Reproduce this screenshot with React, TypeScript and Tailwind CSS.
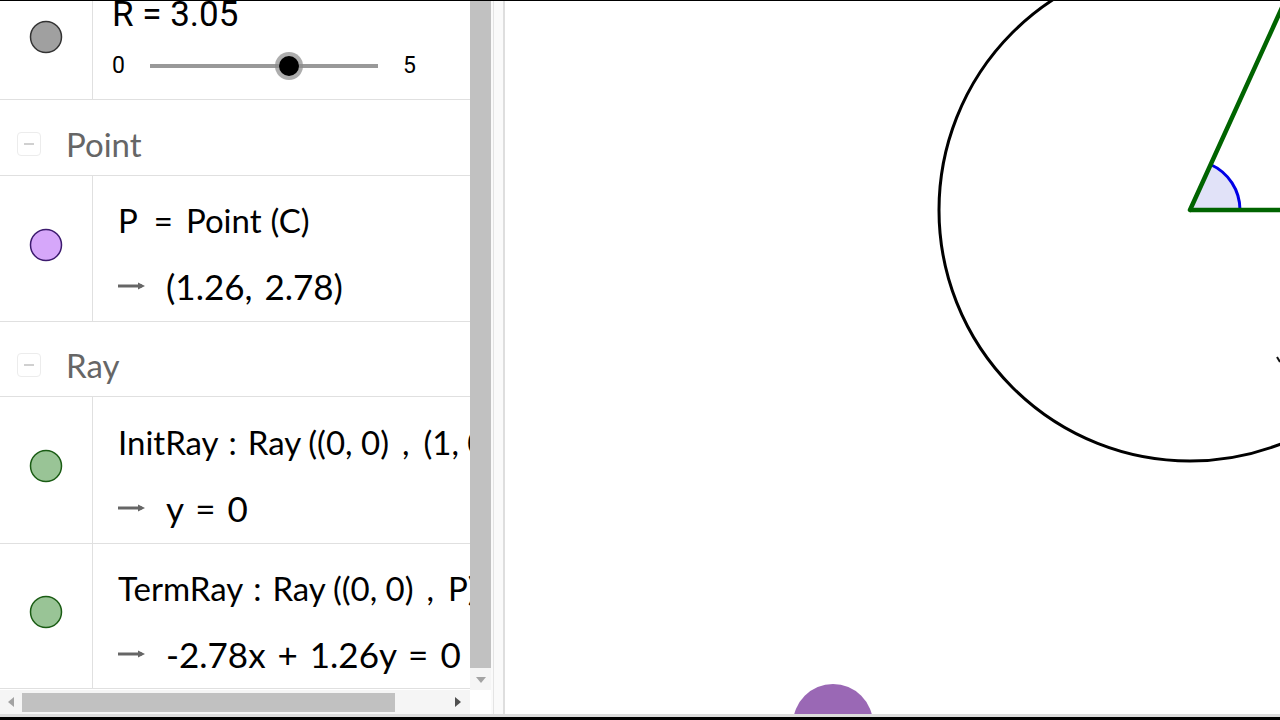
import React from "react";

const math = { fontFamily: "Lato, 'Open Sans', sans-serif" };
const ui = { fontFamily: "Roboto, 'Liberation Sans', sans-serif" };

function Dot({ fill, stroke }: { fill: string; stroke: string }) {
  return (
    <svg width="34" height="34" viewBox="0 0 34 34">
      <circle cx="17" cy="17" r="15.5" fill={fill} stroke={stroke} strokeWidth="1.5" />
    </svg>
  );
}

function Arrow() {
  return (
    <svg width="28" height="12" viewBox="0 0 28 12" className="shrink-0">
      <line x1="0" y1="6" x2="24" y2="6" stroke="#666" strokeWidth="3" />
      <path d="M20 2.5 L27 6 L20 9.5 Z" fill="#666" />
    </svg>
  );
}

// fixed-width gap between math tokens
function Sp({ w }: { w: string }) {
  return <span className={`inline-block ${w}`} />;
}

function GroupHeader({ title, h }: { title: string; h: string }) {
  return (
    <div className={`flex items-center border-b border-[#e0e0e0] pl-[17px] pt-[12px] ${h}`}>
      <div className="flex h-[24px] w-[24px] items-center justify-center rounded-[4px] border border-[#ececec]">
        <div className="h-[2px] w-[10px] bg-[#d0d0d0]" />
      </div>
      <span className="ml-[25px] text-[33px] leading-[40px] text-[#666]" style={math}>
        {title}
      </span>
    </div>
  );
}

function Item({
  h,
  fill,
  stroke,
  def,
  out,
}: {
  h: string;
  fill: string;
  stroke: string;
  def: React.ReactNode;
  out: string;
}) {
  return (
    <div className={`flex border-b border-[#e0e0e0] ${h}`}>
      <div className="flex w-[93px] shrink-0 items-center justify-center border-r border-[#e0e0e0] pb-[8px]">
        <Dot fill={fill} stroke={stroke} />
      </div>
      <div
        className="flex flex-col justify-center gap-[27px] overflow-hidden whitespace-nowrap pl-[25px] pt-[10px] text-black"
        style={math}
      >
        <div className="text-[33px] leading-[38px]">{def}</div>
        <div className="flex items-center gap-[20px] text-[35px] leading-[40px] [word-spacing:3px]">
          <Arrow />
          <span>{out}</span>
        </div>
      </div>
    </div>
  );
}

export default function App() {
  return (
    <div className="flex h-[720px] w-[1280px] flex-col overflow-hidden border-t border-black bg-white">
      <div className="flex min-h-0 flex-1">
        {/* algebra view */}
        <div className="flex w-[491px] shrink-0 flex-col">
          <div className="flex min-h-0 flex-1">
            <div className="w-[470px] shrink-0 overflow-hidden">
              {/* slider row */}
              <div className="flex h-[99px] border-b border-[#e0e0e0]">
                <div className="flex w-[93px] shrink-0 justify-center border-r border-[#e0e0e0] pt-[19px]">
                  <Dot fill="#a0a0a0" stroke="#333" />
                </div>
                <div className="relative flex-1" style={ui}>
                  <div className="absolute left-[19px] top-[-6px] text-[35px] leading-[40px] text-black">R = 3.05</div>
                  <div className="absolute left-[19px] top-[50px] flex items-center">
                    <span className="w-[26px] text-[23px] leading-[30px]">0</span>
                    <div className="relative ml-[12px] h-[4px] w-[228px] bg-[#999]">
                      <div className="absolute left-[125px] top-[-12px] h-[28px] w-[28px] rounded-full bg-[#8a8a8a]/70" />
                      <div className="absolute left-[129px] top-[-8px] h-[20px] w-[20px] rounded-full bg-black" />
                    </div>
                    <span className="ml-[25px] text-[23px] leading-[30px]">5</span>
                  </div>
                </div>
              </div>
              <GroupHeader title="Point" h="h-[76px]" />
              <Item
                h="h-[146px]"
                fill="#d6a7fa"
                stroke="#3c1a6e"
                def={
                  <>
                    P<Sp w="w-[16px]" />=<Sp w="w-[13px]" />Point<Sp w="w-[9px]" />(C)
                  </>
                }
                out="(1.26, 2.78)"
              />
              <GroupHeader title="Ray" h="h-[75px]" />
              <Item
                h="h-[147px]"
                fill="#99c496"
                stroke="#1a5c14"
                def={
                  <>
                    InitRay<Sp w="w-[10px]" />:<Sp w="w-[11px]" />Ray<Sp w="w-[7px]" />((0, 0)<Sp w="w-[13px]" />,
                    <Sp w="w-[14px]" />(1, 0))
                  </>
                }
                out="y = 0"
              />
              <Item
                h="h-[145px]"
                fill="#99c496"
                stroke="#1a5c14"
                def={
                  <>
                    TermRay<Sp w="w-[10px]" />:<Sp w="w-[11px]" />Ray<Sp w="w-[7px]" />((0, 0)<Sp w="w-[13px]" />,
                    <Sp w="w-[14px]" />P)
                  </>
                }
                out="-2.78x + 1.26y = 0"
              />
            </div>
            {/* vertical scrollbar */}
            <div className="flex w-[21px] shrink-0 flex-col bg-[#f5f5f5]">
              <div className="h-[667px] bg-[#c1c1c1]" />
              <div className="flex flex-1 items-start justify-center pt-[9px]">
                <svg width="10" height="6" viewBox="0 0 10 6">
                  <path d="M0 0 L10 0 L5 6 Z" fill="#a3a3a3" />
                </svg>
              </div>
            </div>
          </div>
          {/* horizontal scrollbar */}
          <div className="flex h-[24px]">
            <div className="flex w-[470px] items-center bg-[#f5f5f5]">
              <div className="flex w-[22px] justify-center">
                <svg width="6" height="10" viewBox="0 0 6 10">
                  <path d="M6 0 L6 10 L0 5 Z" fill="#a3a3a3" />
                </svg>
              </div>
              <div className="h-[19px] w-[373px] bg-[#c1c1c1]" />
              <div className="flex flex-1 justify-end pr-[9px]">
                <svg width="6" height="10" viewBox="0 0 6 10">
                  <path d="M0 0 L6 5 L0 10 Z" fill="#505050" />
                </svg>
              </div>
            </div>
            <div className="flex-1 bg-white" />
          </div>
        </div>
        {/* splitter */}
        <div className="flex w-[14px] shrink-0 bg-[#fafafa]">
          <div className="ml-[2px] w-[1px] bg-[#e4e4e4]" />
          <div className="flex-1" />
          <div className="w-[2px] bg-[#dedede]" />
        </div>
        {/* graphics view */}
        <svg className="flex-1" viewBox="505 1 775 713" preserveAspectRatio="none">
          <path d="M1190 210 L1240 210 A50 50 0 0 0 1210.6 164.5 Z" fill="#e1e2f8" />
          <path d="M1240 210 A50 50 0 0 0 1210.6 164.5" fill="none" stroke="#0000e6" strokeWidth="3" />
          <circle cx="1190" cy="210" r="251" fill="none" stroke="#000" strokeWidth="3" />
          <line x1="1190" y1="210" x2="1300" y2="210" stroke="#006400" strokeWidth="4.5" />
          <line x1="1190" y1="210" x2="1290" y2="-10" stroke="#006400" strokeWidth="4.5" strokeLinecap="round" />
          <path d="M1277 357 L1280 362" stroke="#111" strokeWidth="2" />
          <circle cx="833" cy="724" r="40" fill="#9a68b5" />
        </svg>
      </div>
      <div className="h-[3px] bg-[#dcdcdc]" />
      <div className="h-[3px] bg-black" />
    </div>
  );
}
